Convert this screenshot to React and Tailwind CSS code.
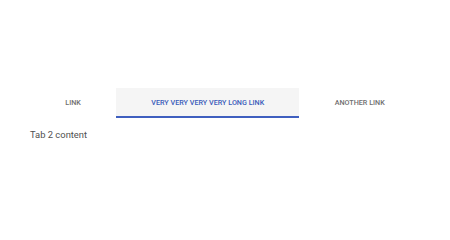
import React, { useState } from 'react';

const tabs = ['Link', 'Very very very very long link', 'Another link'];

const App = () => {
    const [active, setActive] = useState(1);

    return (
        <div className="w-[450px] h-[227px] bg-white pt-[88px] px-[30px]" style={{ fontFamily: 'Roboto, "Liberation Sans", sans-serif' }}>
            <div className="flex">
                {tabs.map((t, i) => (
                    <button
                        key={t}
                        onClick={() => setActive(i)}
                        className={
                            i === active
                                ? 'grow h-[30px] px-[35px] pt-[2px] bg-[#f5f5f5] border-b-2 border-[#3f5fbf] text-[#3a5cba] text-[7.2px] font-medium uppercase whitespace-nowrap'
                                : 'grow h-[30px] px-[35px] pt-[2px] border-b-2 border-transparent text-[#6f6f6f] text-[7.2px] font-medium uppercase whitespace-nowrap'
                        }
                    >
                        {t}
                    </button>
                ))}
            </div>
            <div className="pt-[10px] text-[9.4px] text-[#505050]">
                Tab {active + 1} content
            </div>
        </div>
    );
};

export default App;
